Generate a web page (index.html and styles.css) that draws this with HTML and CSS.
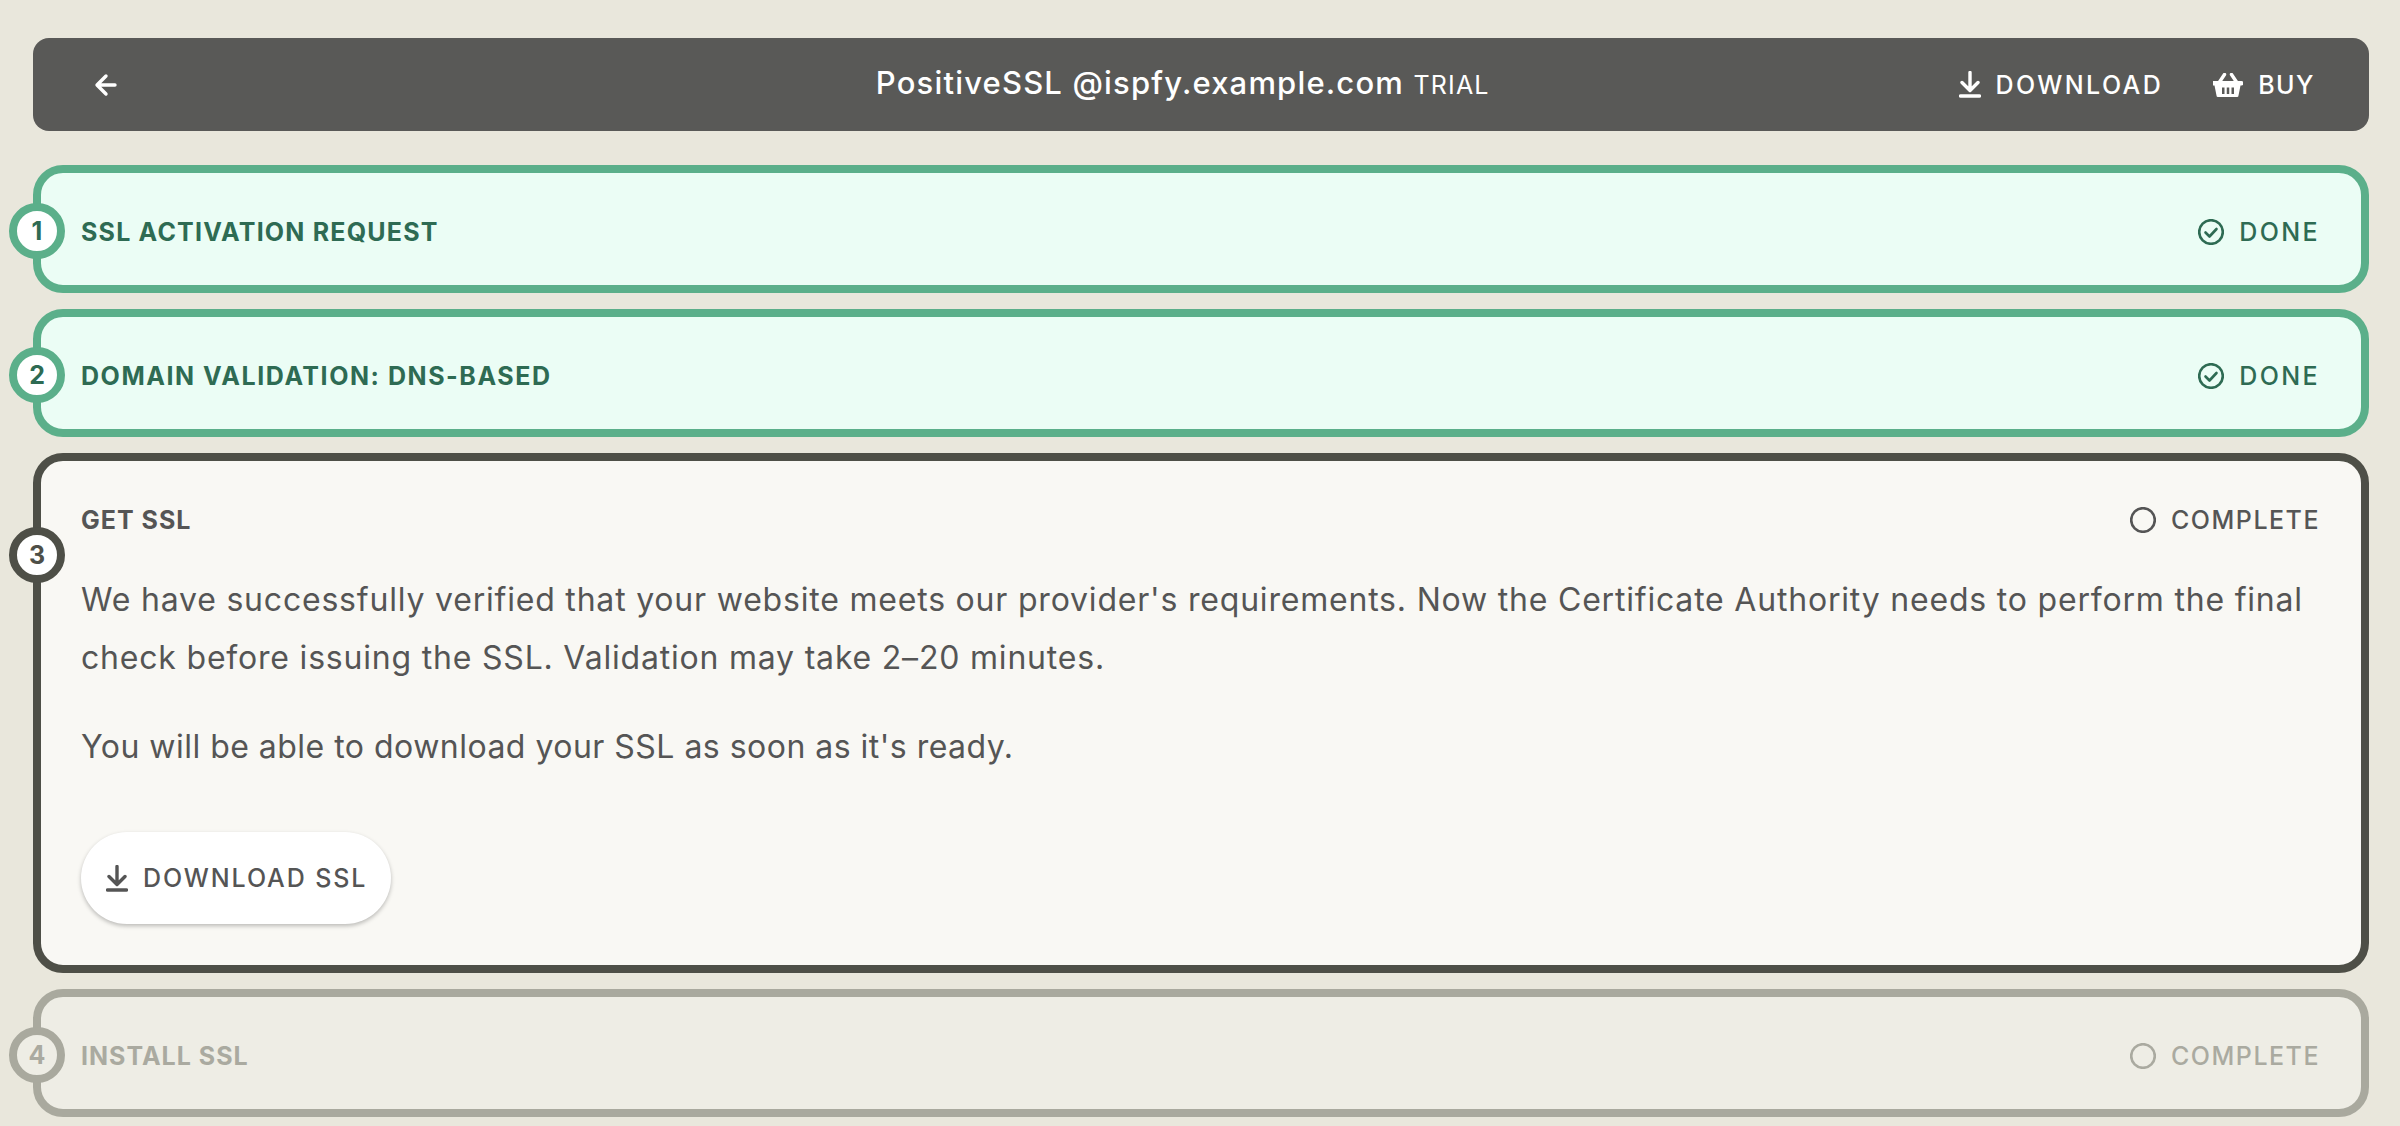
FILE: index.html
```html
<!DOCTYPE html>
<html lang="en">
<head>
    <meta http-equiv="Content-Type" content="text/html; charset=utf-8"/>
    <link rel="stylesheet" href="styles.css">
</head>
<body>
<div class="topbar">
    <div class="back_slot">
        <svg class="arrow_icon" viewBox="0 0 24 24"><path d="M21 12H4M12 3l-9 9 9 9"/></svg>
    </div>
    <div class="title">PositiveSSL @ispfy.example.com <span class="trial">TRIAL</span></div>
    <div class="actions">
        <a class="action action_download">
            <svg class="icon" viewBox="0 0 22 27"><path d="M11 1.500v17M3 11.500l8 8 8-8M1.500 25h19"/></svg>
            DOWNLOAD
        </a>
        <a class="action action_buy">
            <svg class="basket" viewBox="0 0 30 24"><path class="solid" d="M1.500 8h27a1.500 1.500 0 0 1 0 4.500h-1l-2 10a1.500 1.500 0 0 1-1.500 1.500h-19a1.500 1.500 0 0 1-1.500-1.500l-2-10h-1a1.500 1.500 0 0 1 0-4.500zM9 14.500v6.500h2.500v-6.500zM13.750 14.500v6.500h2.500v-6.500zM18.500 14.500v6.500h2.500v-6.500z"/><path class="handle" d="M6.500 9l5-7.500M23.500 9l-5-7.500"/></svg>
            BUY
        </a>
    </div>
</div>

<div class="step step_done">
    <div class="num">1</div>
    <div class="step_head">
        <div class="step_title">SSL ACTIVATION REQUEST</div>
        <div class="status">
            <svg class="status_icon" viewBox="0 0 26 26"><circle cx="13" cy="13" r="11.800"/><path d="M7.500 13.500l4 4 7-7.500"/></svg>
            DONE
        </div>
    </div>
</div>

<div class="step step_done">
    <div class="num">2</div>
    <div class="step_head">
        <div class="step_title step_title_long">DOMAIN VALIDATION: DNS-BASED</div>
        <div class="status">
            <svg class="status_icon" viewBox="0 0 26 26"><circle cx="13" cy="13" r="11.800"/><path d="M7.500 13.500l4 4 7-7.500"/></svg>
            DONE
        </div>
    </div>
</div>

<div class="step step_active">
    <div class="num">3</div>
    <div class="step_head">
        <div class="step_title">GET SSL</div>
        <div class="status">
            <svg class="status_icon" viewBox="0 0 26 26"><circle cx="13" cy="13" r="11.800"/></svg>
            COMPLETE
        </div>
    </div>
    <div class="step_body">
        <p>We have successfully verified that your website meets our provider's requirements. Now the Certificate Authority needs to perform the final check before issuing the SSL. Validation may take 2–20 minutes.</p>
        <p>You will be able to download your SSL as soon as it's ready.</p>
        <a class="btn">
            <svg class="icon" viewBox="0 0 22 27"><path d="M11 1.500v17M3 11.500l8 8 8-8M1.500 25h19"/></svg>
            DOWNLOAD SSL
        </a>
    </div>
</div>

<div class="step step_todo">
    <div class="num">4</div>
    <div class="step_head">
        <div class="step_title">INSTALL SSL</div>
        <div class="status">
            <svg class="status_icon" viewBox="0 0 26 26"><circle cx="13" cy="13" r="11.800"/></svg>
            COMPLETE
        </div>
    </div>
</div>
</body>
</html>
```

FILE: styles.css
```css
html, body {
    margin: 0;
    height: 1126px;
    overflow: hidden;
}

body {
    background: #e9e7dc;
    font-family: Inter, "Noto Sans", sans-serif;
    padding: 38px 31px 0 33px;
    box-sizing: border-box;
}

a {
    display: flex;
    align-items: center;
}

.topbar {
    height: 93px;
    background: #595957;
    border-radius: 16px;
    color: #fff;
    display: flex;
    align-items: center;
    padding: 0 54px 0 61px;
    margin-bottom: 34px;
}

.back_slot {
    width: 313px;
    display: flex;
}

.arrow_icon {
    width: 24px;
    height: 24px;
    fill: none;
    stroke: #fff;
    stroke-width: 3.4;
    stroke-linecap: round;
    stroke-linejoin: round;
}

.title {
    flex: 1;
    text-align: center;
    font-size: 31px;
    font-weight: 500;
    letter-spacing: 1.17px;
    white-space: nowrap;
    padding-bottom: 5px;
}

.trial {
    font-size: 25px;
    font-weight: 400;
}

.actions {
    display: flex;
    align-items: center;
    gap: 50px;
    font-size: 25px;
    font-weight: 500;
}

.action {
    gap: 15px;
}

.action_download {
    letter-spacing: 2.4px;
}

.action_buy {
    letter-spacing: 1.5px;
}

.icon {
    width: 22px;
    height: 27px;
    fill: none;
    stroke: currentColor;
    stroke-width: 3.4;
    stroke-linecap: round;
    stroke-linejoin: round;
}

.basket {
    width: 30px;
    height: 24px;
}

.basket .solid {
    fill: #fff;
    fill-rule: evenodd;
}

.basket .handle {
    fill: none;
    stroke: #fff;
    stroke-width: 3.4;
    stroke-linecap: round;
}

.step {
    position: relative;
    border: 8px solid;
    border-radius: 30px;
    margin-bottom: 16px;
}

.num {
    position: absolute;
    left: -32px;
    top: 30px;
    width: 40px;
    height: 40px;
    border: 8px solid;
    border-radius: 50%;
    display: flex;
    align-items: center;
    justify-content: center;
    font-size: 25px;
    font-weight: 700;
}

.step_head {
    height: 112px;
    box-sizing: border-box;
    padding: 6px 41px 0 40px;
    display: flex;
    align-items: center;
    justify-content: space-between;
}

.step_title {
    font-size: 25px;
    font-weight: 700;
    letter-spacing: 1px;
}

.step_done .step_title {
    letter-spacing: 1.2px;
}

.step_done .step_title_long {
    letter-spacing: 1.55px;
}

.status {
    display: flex;
    align-items: center;
    gap: 15px;
    font-size: 25px;
    font-weight: 500;
    letter-spacing: 1.5px;
}

.status_icon {
    width: 26px;
    height: 26px;
    fill: none;
    stroke: currentColor;
    stroke-width: 2.600;
    stroke-linecap: round;
    stroke-linejoin: round;
}

.step_body {
    margin-top: -2px;
    padding: 0 40px 41px 40px;
    font-size: 32px;
    line-height: 58px;
    letter-spacing: 0.8px;
}

.step_body p {
    margin: 0 0 31px 0;
}

.step_body p + p {
    letter-spacing: 0.48px;
}

.btn {
    width: 310px;
    height: 92px;
    box-sizing: border-box;
    margin-top: 56px;
    padding-left: 25px;
    gap: 15px;
    background: #fff;
    border-radius: 46px;
    box-shadow: 0 2px 4px rgba(0, 0, 0, 0.25);
    font-size: 25px;
    font-weight: 500;
    line-height: normal;
    letter-spacing: 1.9px;
}

.step_done {
    border-color: #5baf8a;
    background: #ebfdf5;
    color: #2e6b53;
}

.step_done .num {
    background: #fff;
    border-color: #5baf8a;
}

.step_done .status {
    letter-spacing: 2.4px;
}

.step_active {
    border-color: #4e4f47;
    background: #f9f8f4;
    color: #555;
}

.step_active .num {
    top: 66px;
    background: #fff;
    border-color: #4e4f47;
    color: #4e4f47;
}

.step_todo {
    border-color: #a9a99e;
    background: #eeede5;
    color: #aaaaa0;
}

.step_todo .num {
    background: #eeede5;
    border-color: #a9a99e;
}
```
